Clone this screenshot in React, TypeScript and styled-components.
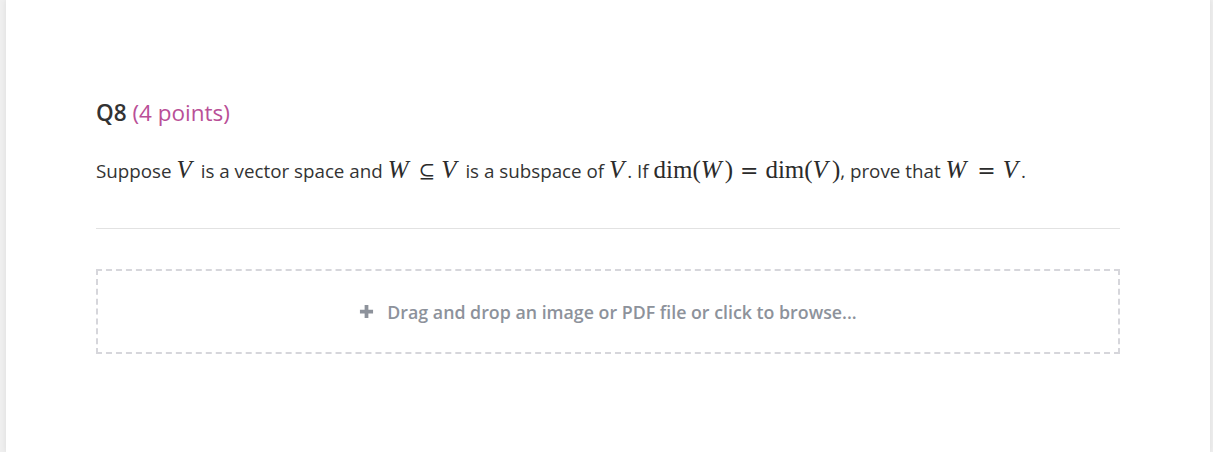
import React from "react";
import styled, { createGlobalStyle } from "styled-components";

const Global = createGlobalStyle`
  html, body { margin: 0; padding: 0; background: #efefef; }
  body { font-family: "Open Sans", "Noto Sans", sans-serif; }
`;

const Page = styled.div`
  display: flex;
  padding: 0 3px 0 6px;
  height: 452px;
  box-sizing: border-box;
`;

const Card = styled.div`
  flex: 1;
  background: #fff;
  box-shadow: 0 0 6px rgba(0,0,0,0.08);
  padding: 96px 90px 0 90px;
`;

const Title = styled.h2`
  margin: 0;
  font-size: 22.5px;
  font-weight: 600;
  color: #333;
  line-height: 34px;
`;

const Points = styled.span`
  color: #b94f97;
  font-weight: 500;
`;

const Prompt = styled.p`
  margin: 26px 0 0;
  font-size: 18.8px;
  color: #333;
  line-height: 30px;
  height: 30px;
  white-space: nowrap;
`;

const MathBase = styled.span`
  font-family: "Liberation Serif", "DejaVu Serif", serif;
  font-size: 25px;
  line-height: 1;
  color: #2b2b2b;
`;

const Var = styled(MathBase)<{ $pr?: number }>`
  font-style: italic;
  padding-right: ${(p) => p.$pr ?? 2}px;
`;

const Op = styled(MathBase)``;

const Rel = styled(MathBase)<{ $size?: number; $m?: number }>`
  font-family: "DejaVu Serif", serif;
  margin: 0 ${(p) => p.$m ?? 7}px;
  font-size: ${(p) => p.$size ?? 22}px;
`;

const Divider = styled.hr`
  border: 0;
  border-top: 1px solid #e2e2e2;
  margin: 42px 0 40px;
`;

const Drop = styled.div`
  height: 85px;
  border: 2px dashed #d6d6db;
  box-sizing: border-box;
  display: flex;
  align-items: center;
  justify-content: center;
  gap: 13px;
  color: #8d929b;
  font-size: 17.8px;
  font-weight: 600;
`;

const Plus = styled.svg`
  width: 15px;
  height: 15px;
`;

export default function App() {
  return (
    <>
      <Global />
      <Page>
        <Card>
          <Title>
            Q8 <Points>(4 points)</Points>
          </Title>
          <Prompt>
            Suppose <Var $pr={4}>V</Var> is a vector space and <Var $pr={4}>W</Var>
            <Rel $size={20} $m={6}>⊆</Rel>
            <Var $pr={4}>V</Var> is a subspace of <Var $pr={3}>V</Var>. If <Op>dim(</Op>
            <Var $pr={3}>W</Var>
            <Op>)</Op>
            <Rel>=</Rel>
            <Op>dim(</Op>
            <Var $pr={4}>V</Var>
            <Op>)</Op>, prove that <Var $pr={4}>W</Var>
            <Rel>=</Rel>
            <Var $pr={3}>V</Var>.
          </Prompt>
          <Divider />
          <Drop>
            <Plus viewBox="0 0 16 16">
              <path d="M6 1h4v5h5v4h-5v5H6v-5H1V6h5z" fill="#8d929b" />
            </Plus>
            Drag and drop an image or PDF file or click to browse...
          </Drop>
        </Card>
      </Page>
    </>
  );
}
